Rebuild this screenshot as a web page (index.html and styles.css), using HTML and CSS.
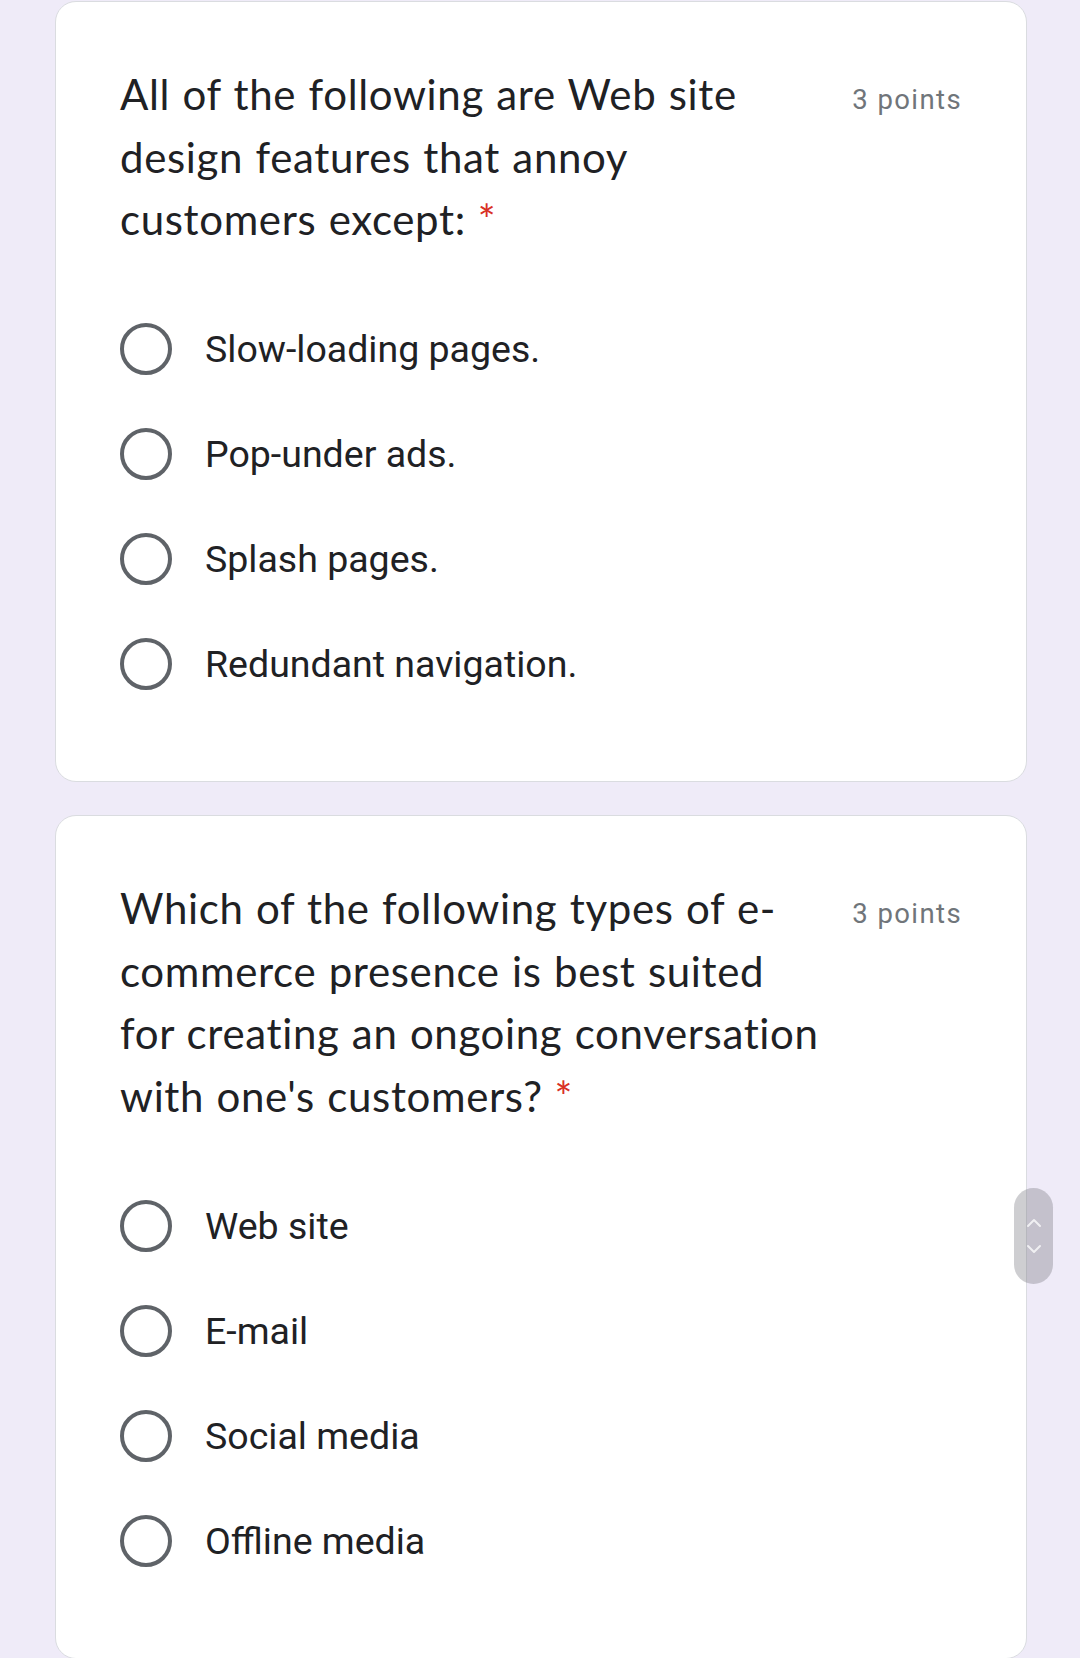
FILE: index.html
```html
<!DOCTYPE html>
<html lang="en">
<head>
<meta charset="utf-8">
<title>Form</title>
<link rel="stylesheet" href="styles.css">
</head>
<body>
<main class="page">
  <section class="card card-first">
    <div class="q-head">
      <div class="q-title">All of the following are Web site<br>design features that annoy<br>customers except:<span class="req">*</span></div>
      <div class="q-points">3 points</div>
    </div>
    <ul class="options">
      <li class="option"><span class="radio"></span><span class="opt-label">Slow-loading pages.</span></li>
      <li class="option"><span class="radio"></span><span class="opt-label">Pop-under ads.</span></li>
      <li class="option"><span class="radio"></span><span class="opt-label">Splash pages.</span></li>
      <li class="option"><span class="radio"></span><span class="opt-label">Redundant navigation.</span></li>
    </ul>
  </section>
  <section class="card card-second">
    <div class="q-head">
      <div class="q-title">Which of the following types of e-<br>commerce presence is best suited<br>for creating an ongoing conversation<br>with one's customers?<span class="req">*</span></div>
      <div class="q-points">3 points</div>
    </div>
    <ul class="options">
      <li class="option"><span class="radio"></span><span class="opt-label">Web site</span></li>
      <li class="option"><span class="radio"></span><span class="opt-label">E-mail</span></li>
      <li class="option"><span class="radio"></span><span class="opt-label">Social media</span></li>
      <li class="option"><span class="radio"></span><span class="opt-label">Offline media</span></li>
    </ul>
  </section>
</main>
<div class="scroll-pill">
  <svg class="chev" width="16" height="10" viewBox="0 0 16 10"><path d="M2 8 L8 2 L14 8" fill="none" stroke="#ffffff" stroke-opacity="0.75" stroke-width="2" stroke-linecap="round" stroke-linejoin="round"/></svg>
  <svg class="chev" width="16" height="10" viewBox="0 0 16 10"><path d="M2 2 L8 8 L14 2" fill="none" stroke="#ffffff" stroke-opacity="0.75" stroke-width="2" stroke-linecap="round" stroke-linejoin="round"/></svg>
</div>
</body>
</html>
```

FILE: styles.css
```css
html, body {
  margin: 0;
  padding: 0;
  background: #efebf8;
}
body {
  width: 1080px;
  height: 1658px;
  overflow: hidden;
  position: relative;
}
.page {
  padding: 1px 0 0 55px;
  width: 972px;
  display: flex;
  flex-direction: column;
  gap: 33px;
}
.card {
  box-sizing: border-box;
  background: #ffffff;
  border: 1px solid #dadce0;
  border-radius: 21px;
  padding: 61px 64px 0 64px;
}
.card-first {
  height: 781px;
}
.card-second {
  height: 844px;
}
.q-head {
  display: flex;
  align-items: flex-start;
  justify-content: space-between;
}
.q-title {
  font-family: Lato, "Open Sans", sans-serif;
  font-size: 42px;
  letter-spacing: 0.65px;
  word-spacing: 1px;
  font-variant-ligatures: none;
  line-height: 62.5px;
  color: #202124;
}
.req {
  color: #d93025;
  font-size: 42px;
  margin-left: 12px;
}
.q-points {
  font-family: Roboto, sans-serif;
  font-size: 27.5px;
  letter-spacing: 1.4px;
  line-height: 62.5px;
  color: #70757a;
  margin-top: 6px;
  white-space: nowrap;
}
.options {
  list-style: none;
  margin: 46px 0 0 0;
  padding: 0;
}
.option {
  height: 105px;
  display: flex;
  align-items: center;
}
.radio {
  box-sizing: border-box;
  width: 52px;
  height: 52px;
  border: 4.5px solid #5f6368;
  border-radius: 50%;
  flex: none;
}
.opt-label {
  margin-left: 33px;
  font-family: Roboto, sans-serif;
  font-size: 37.5px;
  line-height: 52px;
  color: #202124;
}
.scroll-pill {
  position: absolute;
  left: 1014px;
  top: 1188px;
  width: 39px;
  height: 96px;
  border-radius: 20px;
  background: rgba(120, 120, 128, 0.36);
  display: flex;
  flex-direction: column;
  align-items: center;
  justify-content: center;
  gap: 16px;
}
.chev {
  display: block;
}
```
